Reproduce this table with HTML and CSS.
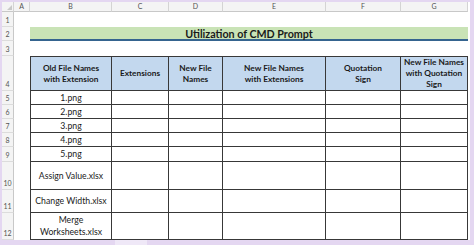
FILE: index.html
```html
<!DOCTYPE html>
<html>
<head>
<meta charset="utf-8">
<link rel="stylesheet" href="styles.css">
</head>
<body>
<div class="frame">
  <div class="sheet">
    <div class="grid">
      <div class="corner"><span class="tri"></span></div>
      <div class="ch">A</div><div class="ch">B</div><div class="ch">C</div><div class="ch">D</div><div class="ch">E</div><div class="ch">F</div><div class="ch">G</div>

      <div class="rh">1</div><div></div><div></div><div></div><div></div><div></div><div></div><div></div>

      <div class="rh">2</div><div></div><div class="title">Utilization of CMD Prompt</div>

      <div class="rh">3</div><div></div><div></div><div></div><div></div><div></div><div></div><div></div>

      <div class="rh">4</div><div></div>
      <div class="th first">Old File Names<br>with Extension</div>
      <div class="th">Extensions</div>
      <div class="th">New File<br>Names</div>
      <div class="th">New File Names<br>with Extensions</div>
      <div class="th">Quotation<br>Sign</div>
      <div class="th">New File Names<br>with Quotation<br>Sign</div>

      <div class="rh">5</div><div></div><div class="td first">1.png</div><div class="td"></div><div class="td"></div><div class="td"></div><div class="td"></div><div class="td"></div>
      <div class="rh">6</div><div></div><div class="td first">2.png</div><div class="td"></div><div class="td"></div><div class="td"></div><div class="td"></div><div class="td"></div>
      <div class="rh">7</div><div></div><div class="td first">3.png</div><div class="td"></div><div class="td"></div><div class="td"></div><div class="td"></div><div class="td"></div>
      <div class="rh">8</div><div></div><div class="td first">4.png</div><div class="td"></div><div class="td"></div><div class="td"></div><div class="td"></div><div class="td"></div>
      <div class="rh">9</div><div></div><div class="td first">5.png</div><div class="td"></div><div class="td"></div><div class="td"></div><div class="td"></div><div class="td"></div>
      <div class="rh">10</div><div></div><div class="td first">Assign Value.xlsx</div><div class="td"></div><div class="td"></div><div class="td"></div><div class="td"></div><div class="td"></div>
      <div class="rh">11</div><div></div><div class="td first">Change Width.xlsx</div><div class="td"></div><div class="td"></div><div class="td"></div><div class="td"></div><div class="td"></div>
      <div class="rh">12</div><div></div><div class="td first">Merge<br>Worksheets.xlsx</div><div class="td"></div><div class="td"></div><div class="td"></div><div class="td"></div><div class="td"></div>
    </div>
  </div>
  <div class="hbar"><div class="thumb"></div></div>
</div>
</body>
</html>
```

FILE: styles.css
```css
* { box-sizing: border-box; }
html, body { margin: 0; padding: 0; }
body { width: 474px; height: 245px; overflow: hidden; background: #e4d7f1; font-family: Lato, "Open Sans", sans-serif; }

.frame { display: flex; flex-direction: column; padding: 2px 4px 0 2px; height: 245px; }
.sheet { background: #fff; padding-right: 2px; height: 238px; }
.grid {
  display: grid;
  grid-template-columns: 12px 16px 82px 57px 54px 103px 75px 67px;
  grid-template-rows: 10px 15px 14px 15px 35px 14px 14px 14px 14px 15px 28px 23px 27px;
}

.corner { background: #f4f4f4; border-right: 1px solid #d4d4d4; border-bottom: 1px solid #c8c8c8; position: relative; }
.tri { position: absolute; right: 1px; bottom: 1px; width: 0; height: 0; border-left: 5px solid transparent; border-bottom: 5px solid #c9c9c9; }

.ch {
  background: #f4f4f4; border-right: 1px solid #d4d4d4; border-bottom: 1px solid #c8c8c8;
  font-size: 7px; color: #555; display: flex; align-items: center; justify-content: center; line-height: 1;
}
.rh {
  background: #f4f4f4; border-right: 1px solid #c8c8c8; border-bottom: 1px solid #dcdcdc;
  font-size: 7px; color: #555; display: flex; align-items: flex-end; justify-content: center; line-height: 1; padding-bottom: 2px;
}

.title {
  grid-column: span 6;
  background: #c9e3b6;
  border-bottom: 2px solid #35648f;
  font-weight: 700; font-size: 10.7px; color: #1a1a1a;
  display: flex; align-items: center; justify-content: center;
}

.th, .td {
  border-right: 1px solid #383838; border-bottom: 1px solid #383838;
  display: flex; align-items: center; justify-content: center; text-align: center;
  color: #1a1a1a;
}
.th { background: #c3d8ee; border-top: 1px solid #383838; font-weight: 700; font-size: 8.3px; line-height: 11px; }
.td { font-size: 8.7px; line-height: 12px; }
.first { border-left: 1px solid #383838; }

.hbar { height: 5px; display: flex; }
.thumb { margin-left: 113px; width: 32px; height: 5px; background: #efe8f7; }
```
